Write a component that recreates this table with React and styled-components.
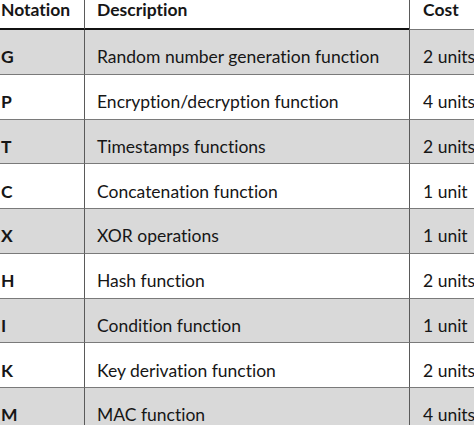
import styled, { createGlobalStyle } from 'styled-components'

const GlobalStyle = createGlobalStyle`
  html, body {
    margin: 0;
    padding: 0;
    background: #fff;
    overflow: hidden;
  }
  body {
    font-family: Lato, 'Open Sans', sans-serif;
    font-variant-ligatures: none;
    color: #161616;
  }
`

const rows = [
  ['G', 'Random number generation function', '2 units'],
  ['P', 'Encryption/decryption function', '4 units'],
  ['T', 'Timestamps functions', '2 units'],
  ['C', 'Concatenation function', '1 unit'],
  ['X', 'XOR operations', '1 unit'],
  ['H', 'Hash function', '2 units'],
  ['I', 'Condition function', '1 unit'],
  ['K', 'Key derivation function', '2 units'],
  ['M', 'MAC function', '4 units'],
]

const Table = styled.div`
  width: 474px;
  overflow: hidden;
  display: grid;
  grid-template-columns: 84px 325px 1fr;
`

const Row = styled.div`
  display: contents;
`

const HeadCell = styled.div`
  display: flex;
  align-items: flex-start;
  box-sizing: border-box;
  padding-left: ${p => p.$pad}px;
  font-size: 17.5px;
  font-weight: 700;
  line-height: 20px;
  border-left: ${p => (p.$first ? 'none' : '1px solid #5a5a5a')};
  border-bottom: ${p => (p.$thick ? '2px solid #111' : '1px solid #777')};
  height: 30px;
  white-space: nowrap;
  overflow: hidden;
`

const Cell = styled.div`
  display: flex;
  align-items: center;
  padding-left: ${p => p.$pad}px;
  padding-top: 10px;
  box-sizing: border-box;
  font-size: 17.5px;
  font-weight: ${p => (p.$bold ? 700 : 400)};
  background: ${p => (p.$shade ? '#d9d9d9' : '#fff')};
  border-left: ${p => (p.$first ? 'none' : '1px solid #5a5a5a')};
  border-bottom: 1px solid #7a7a7a;
  height: 44.75px;
  white-space: nowrap;
  overflow: hidden;
`

export default function App() {
  return (
    <>
      <GlobalStyle />
      <Table>
        <Row>
          <HeadCell $first $thick $pad={1}>Notation</HeadCell>
          <HeadCell $thick $pad={12}>Description</HeadCell>
          <HeadCell $pad={13}>Cost</HeadCell>
        </Row>
        {rows.map(([n, d, c], i) => (
          <Row key={n}>
            <Cell $first $bold $shade={i % 2 === 0} $pad={1}>{n}</Cell>
            <Cell $shade={i % 2 === 0} $pad={12}>{d}</Cell>
            <Cell $shade={i % 2 === 0} $pad={13}>{c}</Cell>
          </Row>
        ))}
      </Table>
    </>
  )
}
